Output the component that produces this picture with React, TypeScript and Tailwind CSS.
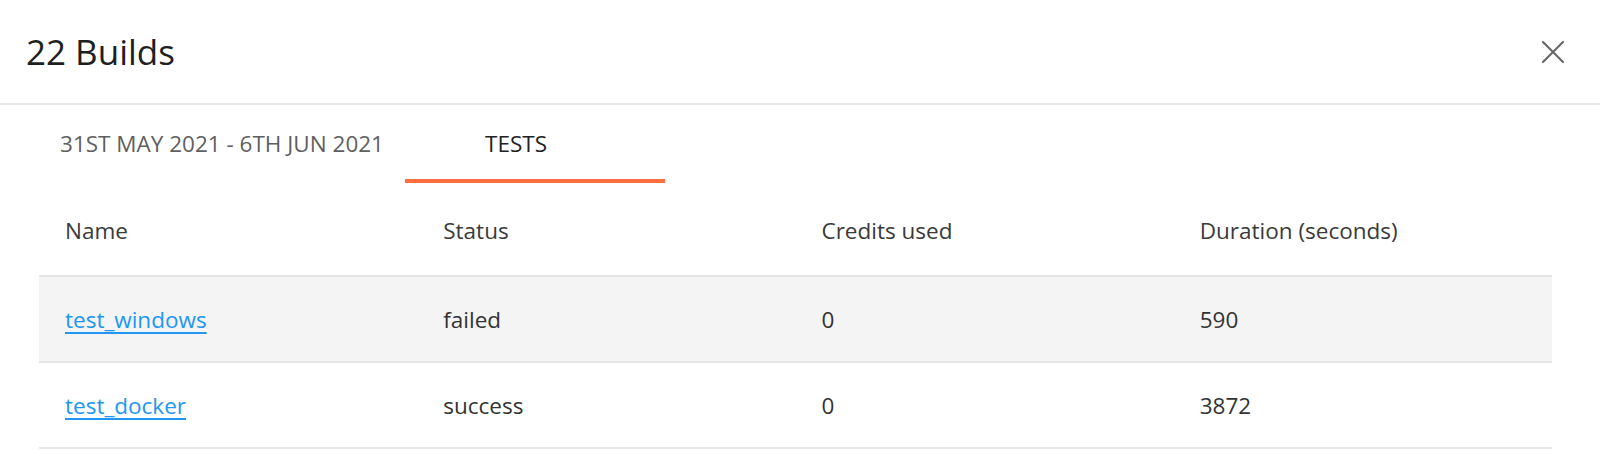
type TestRow = {
  name: string;
  status: string;
  credits: number;
  duration: number;
};

const rows: TestRow[] = [
  { name: "test_windows", status: "failed", credits: 0, duration: 590 },
  { name: "test_docker", status: "success", credits: 0, duration: 3872 },
];

const columns = ["Name", "Status", "Credits used", "Duration (seconds)"];

function CloseIcon() {
  return (
    <svg width="24" height="24" viewBox="0 0 24 24" fill="none" stroke="currentColor" strokeWidth="2.2" strokeLinecap="round">
      <path d="M2 2 L22 22 M22 2 L2 22" />
    </svg>
  );
}

export default function App() {
  return (
    <div className="h-[451px] w-[1600px] overflow-hidden bg-white font-['Open_Sans',sans-serif] text-[#333]">
      <header className="flex h-[105px] items-center justify-between border-b-2 border-[#e8e8e8] pl-[26px] pr-[35px]">
        <h1 className="text-[35px] leading-none text-[#1f1f1f]">22 Builds</h1>
        <button className="flex h-[24px] w-[24px] items-center justify-center text-[#6a6a6a]">
          <CloseIcon />
        </button>
      </header>

      <div className="pl-[39px] pr-[48px]">
        <nav className="flex h-[78px]">
          <button className="flex w-[366px] items-center justify-center text-[22.5px] uppercase text-[#5f5f5f]">
            31st May 2021 - 6th Jun 2021
          </button>
          <button className="flex w-[260px] items-center justify-start border-b-[4px] border-[#ff6e40] pl-[80px] pt-[4px] text-[22.5px] uppercase text-[#222]">
            Tests
          </button>
        </nav>

        <div className="grid h-[92px] grid-cols-4 items-center pt-[3px] text-[22.5px] text-[#3a3a3a]">
          {columns.map((c) => (
            <div key={c} className="pl-[26px]">
              {c}
            </div>
          ))}
        </div>

        <div className="border-b-2 border-[#e6e6e6]">
          {rows.map((r, i) => (
            <div
              key={r.name}
              className={`grid h-[86px] grid-cols-4 items-center border-t-2 border-[#e6e6e6] pt-[2px] text-[22.5px] ${
                i === 0 ? "bg-[#f4f4f4]" : "bg-white"
              }`}
            >
              <div className="pl-[26px]">
                <a href="#" className="text-[#2196f3] underline underline-offset-4">
                  {r.name}
                </a>
              </div>
              <div className="pl-[26px]">{r.status}</div>
              <div className="pl-[26px]">{r.credits}</div>
              <div className="pl-[26px]">{r.duration}</div>
            </div>
          ))}
        </div>
      </div>
    </div>
  );
}
